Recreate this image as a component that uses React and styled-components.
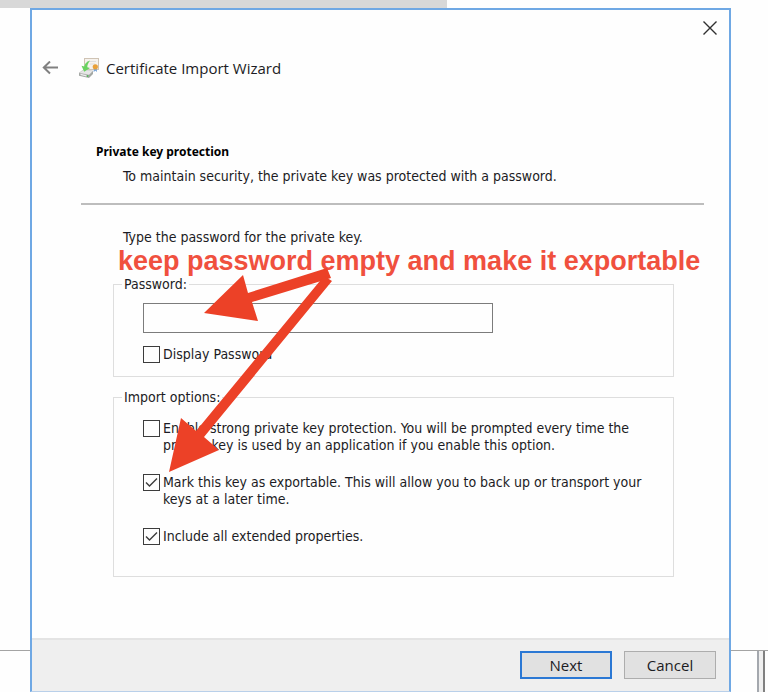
import React, { useState } from 'react';
import styled, { createGlobalStyle } from 'styled-components';

// Global
const GlobalStyle = createGlobalStyle`
  *, *::before, *::after { box-sizing: border-box; }

  body {
    margin: 0;
    background: #fefefe;
    color: #1c1c24;
    font-family: 'DejaVu Sans Condensed', 'Noto Sans', sans-serif;
    font-size: 14px;
    line-height: 17px;
  }
`;

// Page
const Page = styled.div`
  position: relative;
  display: flex;
  min-height: 100vh;
  padding: 8px 37px 0 30px;
`;

const Backdrop = styled.div`
  position: absolute;
  inset: 0;
  display: flex;
  flex-direction: column;
  justify-content: space-between;
`;

const BackdropBar = styled.div`
  width: 447px;
  height: 8px;
  background: #d8d8d8;
`;

const BackdropPanel = styled.div`
  display: flex;
  justify-content: flex-end;
  height: 42px;
  padding-right: 3px;
  border-top: 1px solid #a4a4a4;
`;

const BackdropEdge = styled.div`
  width: 8px;
  background: #efefef;
  border-left: 2px solid #a4a8ae;
  border-right: 2px solid #808080;
`;

// Dialog
const Dialog = styled.section`
  position: relative;
  display: flex;
  flex: 1;
  flex-direction: column;
  background: #fefefe;
  border: 2px solid #6fa8e4;
  border-bottom: 1px solid #b9d0ea;
`;

const CaptionBar = styled.div`
  display: flex;
  justify-content: flex-end;
  height: 36px;
  padding-right: 8px;
`;

const IconButton = styled.button`
  display: flex;
  align-items: center;
  justify-content: center;
  width: ${({ $size }) => $size}px;
  padding: 0;
  background: none;
  border: 0;
`;

const TitleBar = styled.header`
  display: flex;
  align-items: center;
  height: 44px;
  padding-left: 8px;
`;

const WizardIcon = styled.svg`
  margin: 0 6px 0 18px;
`;

const Title = styled.h1`
  margin: 0;
  font-family: 'Open Sans', 'Noto Sans', sans-serif;
  font-size: 15px;
  font-weight: 400;
  line-height: 20px;
`;

const Content = styled.form`
  display: flex;
  flex: 1;
  flex-direction: column;
`;

const Intro = styled.div`
  margin: 50px 25px 0 49px;
  padding: 0 0 15px 15px;
  border-bottom: 2px solid #bdbdbd;
`;

const IntroHeading = styled.h2`
  margin: 0;
  color: #000;
  font-family: 'Noto Sans', sans-serif;
  font-size: 12px;
  line-height: 24px;
`;

const IntroText = styled.p`
  margin: 0;
  padding-left: 27px;
  line-height: 24px;
`;

const Fields = styled.div`
  position: relative;
  flex: 1;
  margin: 0 25px 0 49px;
  padding: 24px 30px 48px 32px;
`;

const Prompt = styled.p`
  margin: 0 0 30px;
  padding-left: 10px;
`;

const Group = styled.fieldset`
  display: flex;
  flex-direction: column;
  gap: ${({ $gap }) => $gap}px;
  margin: 0 0 12px;
  padding: 0 29px ${({ $bottom }) => $bottom}px;
  border: 1px solid #dedede;
`;

const GroupLegend = styled.legend`
  margin: 0 0 ${({ $space }) => $space}px -21px;
  padding: 0 2px;
`;

const PasswordInput = styled.input`
  width: 350px;
  max-width: 100%;
  height: 30px;
  padding: 0 6px;
  background: #fefefe;
  border: 1px solid #7c7c7c;
  font: inherit;
`;

const CheckLabel = styled.label`
  display: flex;
  align-items: flex-start;
  gap: 3px;
`;

const CheckCell = styled.span`
  display: grid;
  flex: none;
  width: 17px;
  height: 17px;

  & > * { grid-area: 1 / 1; }
`;

const CheckInput = styled.input`
  width: 17px;
  height: 17px;
  margin: 0;
  appearance: none;
  background: #fefefe;
  border: 1px solid #3c3c3c;
`;

const Tick = styled.svg`
  visibility: hidden;
  pointer-events: none;

  ${CheckInput}:checked + & { visibility: visible; }
`;

const Footer = styled.footer`
  display: flex;
  justify-content: flex-end;
  gap: 12px;
  padding: 11px 13px 12px;
  background: #efefef;
  border-top: 2px solid #e4e4e4;
`;

const Button = styled.button`
  width: 92px;
  height: 28px;
  padding: 0;
  background: #e1e1e1;
  border: ${({ $primary }) => ($primary ? '2px solid #2b78d4' : '1px solid #adadad')};
  color: #1c1c24;
  font-family: 'Open Sans', 'Noto Sans', sans-serif;
  font-size: 15px;
`;

// Notes drawn over the form
const Note = styled.strong`
  position: absolute;
  top: 41px;
  left: 37px;
  color: #f0503e;
  font-family: 'Liberation Sans', Arial, sans-serif;
  font-size: 27px;
  line-height: 30px;
  white-space: nowrap;
`;

const Arrows = styled.svg`
  position: absolute;
  top: 55px;
  left: 80px;
  pointer-events: none;
`;

const CheckRow = ({ children, ...props }) => (
  <CheckLabel>
    <CheckCell>
      <CheckInput type='checkbox' {...props} />
      <Tick width='17' height='17' viewBox='0 0 17 17' fill='none' stroke='#3c3c3c' strokeWidth='1.4'>
        <path d='M3 8.5 L6.5 12 L14 4.5' />
      </Tick>
    </CheckCell>
    <span>{children}</span>
  </CheckLabel>
);

const App = () => {
  const [password, setPassword] = useState('');
  const [display, setDisplay] = useState(false);

  return (
    <Page>
      <GlobalStyle />
      <Backdrop>
        <BackdropBar />
        <BackdropPanel><BackdropEdge /></BackdropPanel>
      </Backdrop>

      <Dialog role='dialog' aria-labelledby='wizard-title'>
        <CaptionBar>
          <IconButton type='button' $size={22} aria-label='Close'>
            <svg width='14' height='14' viewBox='0 0 14 14' stroke='#303030' strokeWidth='1.4'>
              <path d='M0.5 0.5 L13.5 13.5 M13.5 0.5 L0.5 13.5' />
            </svg>
          </IconButton>
        </CaptionBar>

        <TitleBar>
          <IconButton type='button' $size={20} aria-label='Back'>
            <svg width='16' height='14' viewBox='0 0 16 14' fill='none' stroke='#808080' strokeWidth='2'>
              <path d='M16 6.5 H1.5 M8 0.5 L1.8 6.5 L8 12.5' />
            </svg>
          </IconButton>
          <WizardIcon width='22' height='22' viewBox='0 0 22 22'>
            <rect x='6.5' y='1.5' width='14' height='11' fill='#f6f2ed' stroke='#cfc3b4' />
            <path d='M9 4.5 H18 M12 7 H17' stroke='#dedede' />
            <path d='M16 11 L15.5 15 L17.5 13.8 L19 15 L18.8 11 Z' fill='#7ba6d8' />
            <circle cx='17.3' cy='9.8' r='2.6' fill='#e9a038' />
            <path d='M1 16 L6 12.5 L15 14 L11 18 Z' fill='#e6e6e6' stroke='#bdbdbd' strokeWidth='0.6' />
            <path d='M1 16 L11 18 L15 14 V17 L11 21 L1 18.8 Z' fill='#a3a7a3' />
            <path d='M2.5 17.4 L8.5 18.8' stroke='#ededed' strokeWidth='1.2' />
            <circle cx='9.6' cy='19' r='0.8' fill='#35c23a' />
            <path d='M12 3.5 C8 5 6.5 7.5 6.3 9.5 L3.5 8.8 L6.2 14.8 L12 11 L9.3 10.3 C9.3 8.2 10 6.5 12 3.5 Z' fill='#69d260' />
          </WizardIcon>
          <Title id='wizard-title'>Certificate Import Wizard</Title>
        </TitleBar>

        <Content onSubmit={(e) => e.preventDefault()}>
          <Intro>
            <IntroHeading>Private key protection</IntroHeading>
            <IntroText>To maintain security, the private key was protected with a password.</IntroText>
          </Intro>

          <Fields>
            <Prompt>Type the password for the private key.</Prompt>

            <Group $gap={13} $bottom={13}>
              <GroupLegend $space={10}><label htmlFor='password'>Password:</label></GroupLegend>
              <PasswordInput
                id='password'
                type={display ? 'text' : 'password'}
                value={password}
                onChange={(e) => setPassword(e.target.value)}
              />
              <CheckRow checked={display} onChange={(e) => setDisplay(e.target.checked)}>
                Display Password
              </CheckRow>
            </Group>

            <Group $gap={20} $bottom={31}>
              <GroupLegend $space={14}>Import options:</GroupLegend>
              <CheckRow>
                Enable strong private key protection. You will be prompted every time the<br />
                private key is used by an application if you enable this option.
              </CheckRow>
              <CheckRow defaultChecked>
                Mark this key as exportable. This will allow you to back up or transport your<br />
                keys at a later time.
              </CheckRow>
              <CheckRow defaultChecked>Include all extended properties.</CheckRow>
            </Group>

            <Note>keep password empty and make it exportable</Note>
            <Arrows width='180' height='220' viewBox='0 0 180 220' fill='#ec4127'>
              <path d='M43 53 L82 15 L87 33 L166 8 L170 18 L91 42 L97 61 Z' />
              <path d='M8 212 L20 158 L35 171 L163 16 L171 21 L43 177 L58 190 Z' />
            </Arrows>
          </Fields>

          <Footer>
            <Button type='submit' $primary>Next</Button>
            <Button type='button'>Cancel</Button>
          </Footer>
        </Content>
      </Dialog>
    </Page>
  );
};

export default App;
